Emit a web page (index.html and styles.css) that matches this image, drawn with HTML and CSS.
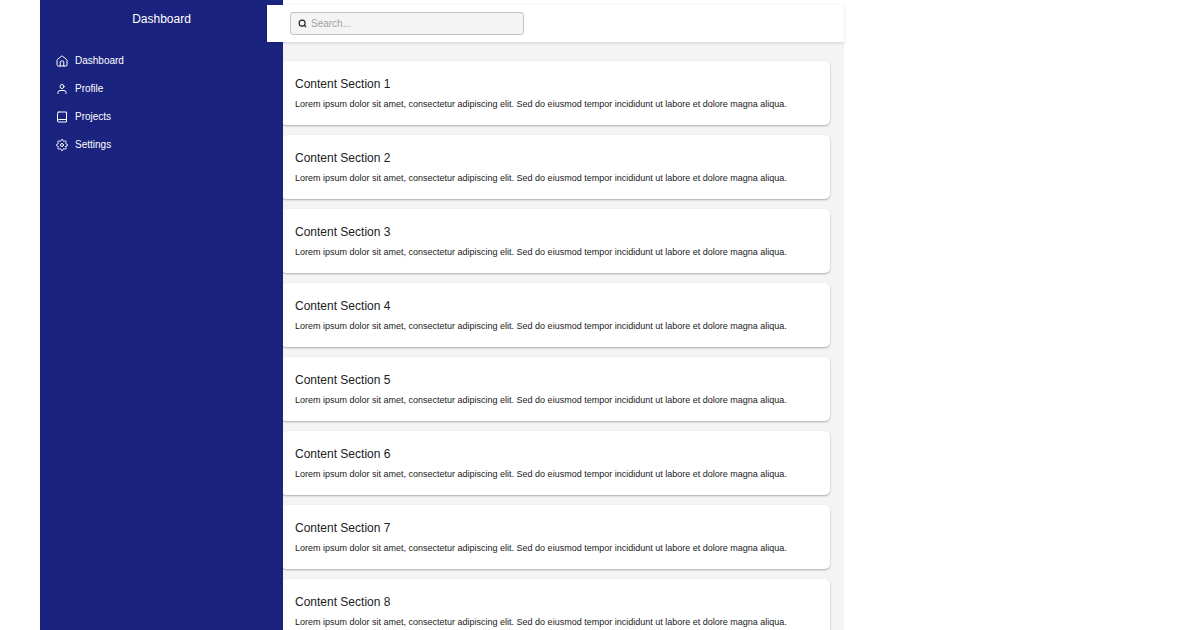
FILE: index.html
```html
<!DOCTYPE html>
<html lang="en">
<head>
    <meta charset="UTF-8">
    <meta name="viewport" content="width=device-width, initial-scale=1">
    <title>Dashboard</title>
    <link rel="stylesheet" href="styles.css">
</head>
<body>
    <div class="app">
        <aside class="sidebar">
            <h1>Dashboard</h1>
            <nav>
                <a href="#">
                    <svg class="icon" viewBox="0 0 24 24"><path d="M2 10.5a2 2 0 0 1 .8-1.6l7.9-6.3a2 2 0 0 1 2.6 0l7.900 6.300A2 2 0 0 1 22 10.500V20a2 2 0 0 1-2 2H4a2 2 0 0 1-2-2z"/><path d="M8.500 22v-8a2 2 0 0 1 2-2h3a2 2 0 0 1 2 2v8"/></svg>
                    Dashboard
                </a>
                <a href="#">
                    <svg class="icon" viewBox="0 0 24 24"><path d="M20 21v-2a4 4 0 0 0-4-4H8a4 4 0 0 0-4 4v2"/><circle cx="12" cy="7" r="4"/></svg>
                    Profile
                </a>
                <a href="#">
                    <svg class="icon" viewBox="0 0 24 24"><path d="M3 19.500A2.500 2.500 0 0 1 5.500 17H21"/><path d="M5.500 2H21v20H5.500A2.500 2.500 0 0 1 3 19.500v-15A2.500 2.500 0 0 1 5.500 2z"/></svg>
                    Projects
                </a>
                <a href="#">
                    <svg class="icon" viewBox="0 0 24 24"><circle cx="12" cy="12" r="3"/><path d="M19.4 15a1.65 1.65 0 0 0 .33 1.82l.06.06a2 2 0 0 1 0 2.83 2 2 0 0 1-2.83 0l-.06-.06a1.65 1.65 0 0 0-1.82-.33 1.65 1.65 0 0 0-1 1.51V21a2 2 0 0 1-2 2 2 2 0 0 1-2-2v-.09A1.65 1.65 0 0 0 9 19.4a1.65 1.65 0 0 0-1.82.33l-.06.06a2 2 0 0 1-2.83 0 2 2 0 0 1 0-2.83l.06-.06a1.65 1.65 0 0 0 .33-1.82 1.65 1.65 0 0 0-1.51-1H3a2 2 0 0 1-2-2 2 2 0 0 1 2-2h.09A1.65 1.65 0 0 0 4.6 9a1.65 1.65 0 0 0-.33-1.82l-.06-.06a2 2 0 0 1 0-2.83 2 2 0 0 1 2.83 0l.06.06a1.65 1.65 0 0 0 1.82.33H9a1.65 1.65 0 0 0 1-1.51V3a2 2 0 0 1 2-2 2 2 0 0 1 2 2v.09a1.65 1.65 0 0 0 1 1.51 1.65 1.65 0 0 0 1.82-.33l.06-.06a2 2 0 0 1 2.83 0 2 2 0 0 1 0 2.83l-.06.06a1.65 1.65 0 0 0-.33 1.82V9a1.65 1.65 0 0 0 1.51 1H21a2 2 0 0 1 2 2 2 2 0 0 1-2 2h-.09a1.65 1.65 0 0 0-1.51 1z"/></svg>
                    Settings
                </a>
            </nav>
        </aside>

        <div class="main">
            <header class="topbar">
                <label class="search">
                    <svg class="search-icon" viewBox="0 0 24 24"><circle cx="11" cy="11" r="8"/><path d="M21 21l-4.35-4.35"/></svg>
                    <input type="search" placeholder="Search..." aria-label="Search">
                </label>
            </header>
            <main class="content">
                <section class="card">
                    <h2>Content Section 1</h2>
                    <p>Lorem ipsum dolor sit amet, consectetur adipiscing elit. Sed do eiusmod tempor incididunt ut labore et dolore magna aliqua.</p>
                </section>
                <section class="card">
                    <h2>Content Section 2</h2>
                    <p>Lorem ipsum dolor sit amet, consectetur adipiscing elit. Sed do eiusmod tempor incididunt ut labore et dolore magna aliqua.</p>
                </section>
                <section class="card">
                    <h2>Content Section 3</h2>
                    <p>Lorem ipsum dolor sit amet, consectetur adipiscing elit. Sed do eiusmod tempor incididunt ut labore et dolore magna aliqua.</p>
                </section>
                <section class="card">
                    <h2>Content Section 4</h2>
                    <p>Lorem ipsum dolor sit amet, consectetur adipiscing elit. Sed do eiusmod tempor incididunt ut labore et dolore magna aliqua.</p>
                </section>
                <section class="card">
                    <h2>Content Section 5</h2>
                    <p>Lorem ipsum dolor sit amet, consectetur adipiscing elit. Sed do eiusmod tempor incididunt ut labore et dolore magna aliqua.</p>
                </section>
                <section class="card">
                    <h2>Content Section 6</h2>
                    <p>Lorem ipsum dolor sit amet, consectetur adipiscing elit. Sed do eiusmod tempor incididunt ut labore et dolore magna aliqua.</p>
                </section>
                <section class="card">
                    <h2>Content Section 7</h2>
                    <p>Lorem ipsum dolor sit amet, consectetur adipiscing elit. Sed do eiusmod tempor incididunt ut labore et dolore magna aliqua.</p>
                </section>
                <section class="card">
                    <h2>Content Section 8</h2>
                    <p>Lorem ipsum dolor sit amet, consectetur adipiscing elit. Sed do eiusmod tempor incididunt ut labore et dolore magna aliqua.</p>
                </section>
            </main>
        </div>
    </div>
</body>
</html>
```
FILE: styles.css
```css
* {
    box-sizing: border-box;
}
body {
    margin: 0;
    font-family: "Liberation Sans", Arial, sans-serif;
    font-size: 10px;
    line-height: 14px;
    color: #212121;
    background-color: #fff;
}
h1, h2, p {
    margin: 0;
    font-weight: normal;
}
.app {
    display: flex;
    width: 67%;
    min-height: 100vh;
    margin-left: 40px;
}
.sidebar {
    position: sticky;
    top: 0;
    z-index: 1;
    flex: 0 0 243px;
    height: 100vh;
    padding: 12px 0;
    background-color: #1a237e;
    color: #fff;
}
.sidebar h1 {
    font-size: 12px;
    line-height: 14px;
    text-align: center;
}
.sidebar nav {
    margin-top: 21px;
}
.sidebar a {
    display: flex;
    align-items: center;
    gap: 7px;
    height: 28px;
    padding: 0 16px;
    color: #fff;
    text-decoration: none;
}
.icon, .search-icon {
    flex: none;
    width: 12px;
    height: 12px;
    fill: none;
    stroke: currentColor;
    stroke-width: 2;
    stroke-linecap: round;
    stroke-linejoin: round;
}
.search-icon {
    width: 9px;
    height: 9px;
    stroke-width: 3;
}
.main {
    flex: 1;
    min-width: 0;
    display: flex;
    flex-direction: column;
}
/* the bar runs over the edge of the sidebar */
.topbar {
    position: relative;
    z-index: 2;
    margin: 5px 0 0 -16px;
    padding: 7px 23px;
    background-color: #fff;
    box-shadow: 0 1px 3px rgba(0, 0, 0, 0.15);
}
.search {
    display: flex;
    align-items: center;
    gap: 4px;
    width: 44%;
    height: 23px;
    padding: 0 7px;
    border: 1px solid #c4c4c4;
    border-radius: 3px;
    background-color: #f4f4f4;
}
.search input {
    flex: 1;
    min-width: 0;
    padding: 0;
    border: 0;
    outline: 0;
    background: none;
    font: inherit;
    color: inherit;
}
.search input::placeholder {
    color: #a2a2a2;
}
.content {
    flex: 1;
    display: flex;
    flex-direction: column;
    gap: 10px;
    margin-left: -2px;
    padding: 19px 14px 19px 0;
    background-color: #f4f4f4;
}
.card {
    padding: 16px 14px 14px;
    border-radius: 5px;
    background-color: #fff;
    box-shadow: 0 1px 2px rgba(0, 0, 0, 0.3);
}
.card h2 {
    margin-bottom: 6px;
    font-size: 12px;
    line-height: 14px;
}
.card p {
    font-size: 9px;
}
```
